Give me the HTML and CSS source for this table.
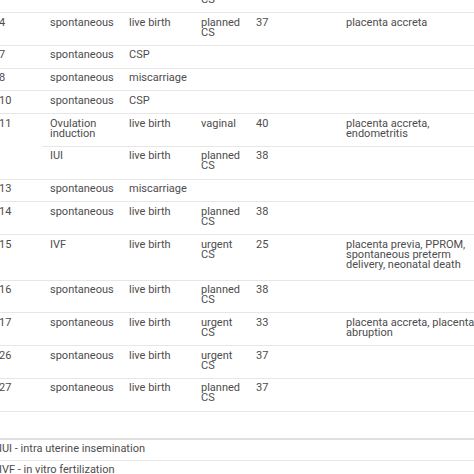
FILE: index.html
```html
<!DOCTYPE html>
<html>
<head>
<meta charset="utf-8">
<link rel="stylesheet" href="styles.css">
</head>
<body>
<div class="sheet">
<table class="cases">
<tr><td class="c1"></td><td class="c2"></td><td class="c3"></td><td class="c4 mode">planned CS</td><td class="c5"></td><td class="c6"></td></tr>
<tr><td>4</td><td>spontaneous</td><td>live birth</td><td class="mode">planned CS</td><td>37</td><td>placenta accreta</td></tr>
<tr><td>7</td><td>spontaneous</td><td>CSP</td><td class="mode"></td><td></td><td></td></tr>
<tr><td>8</td><td>spontaneous</td><td>miscarriage</td><td class="mode"></td><td></td><td></td></tr>
<tr><td>10</td><td>spontaneous</td><td>CSP</td><td class="mode"></td><td></td><td></td></tr>
<tr><td rowspan="2">11</td><td>Ovulation induction</td><td>live birth</td><td class="mode">vaginal</td><td>40</td><td>placenta accreta, endometritis</td></tr>
<tr><td>IUI</td><td>live birth</td><td class="mode">planned CS</td><td>38</td><td></td></tr>
<tr><td>13</td><td>spontaneous</td><td>miscarriage</td><td class="mode"></td><td></td><td></td></tr>
<tr><td>14</td><td>spontaneous</td><td>live birth</td><td class="mode">planned CS</td><td>38</td><td></td></tr>
<tr class="tall"><td>15</td><td>IVF</td><td>live birth</td><td class="mode">urgent CS</td><td>25</td><td>placenta previa, PPROM, spontaneous preterm delivery, neonatal death</td></tr>
<tr><td>16</td><td>spontaneous</td><td>live birth</td><td class="mode">planned CS</td><td>38</td><td></td></tr>
<tr><td>17</td><td>spontaneous</td><td>live birth</td><td class="mode">urgent CS</td><td>33</td><td>placenta accreta, placental abruption</td></tr>
<tr><td>26</td><td>spontaneous</td><td>live birth</td><td class="mode">urgent CS</td><td>37</td><td></td></tr>
<tr class="last"><td>27</td><td>spontaneous</td><td>live birth</td><td class="mode">planned CS</td><td>37</td><td></td></tr>
</table>
<div class="notes">
<div class="note">IUI - intra uterine insemination</div>
<div class="note">IVF - in vitro fertilization</div>
</div>
</div>
</body>
</html>
```
FILE: styles.css
```css
html, body {
  margin: 0;
  padding: 0;
  overflow: hidden;
  background: #ffffff;
}
body {
  font-family: Roboto, "Liberation Sans", Arial, sans-serif;
  font-size: 11px;
  line-height: 10px;
  color: #4d4d4d;
}
.sheet {
  margin: -20.75px 0 0 -9px;
  width: 489px;
}
.cases {
  width: 489px;
  table-layout: fixed;
  border-collapse: separate;
  border-spacing: 0;
}
.cases td {
  box-sizing: border-box;
  vertical-align: top;
  padding: 4.5px 0 7.25px 8px;
  border-top: 1px solid #e6e6e6;
}
.cases .tall td {
  padding-bottom: 10px;
}
.cases .mode {
  padding-right: 4px;
}
.cases .last td {
  border-bottom: 1px solid #e6e6e6;
}
.c1 { width: 51px; }
.c2 { width: 79px; }
.c3 { width: 72px; }
.c4 { width: 55px; }
.c5 { width: 90px; }
.c6 { width: 142px; }
.notes {
  margin-top: 26px;
  border-top: 2px solid #e0e0e0;
  padding-left: 8px;
}
.note {
  padding: 4.5px 0 5.5px 0;
  border-bottom: 1px solid #e6e6e6;
}
```
